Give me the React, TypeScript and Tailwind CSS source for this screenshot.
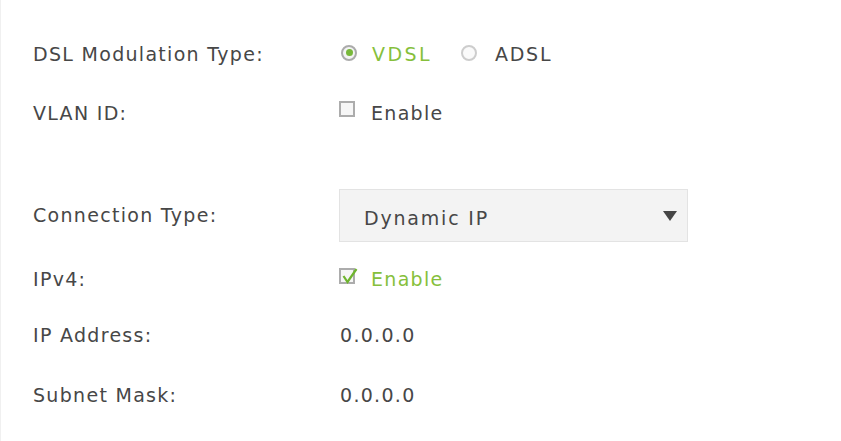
import React from 'react'

// Simple form rows for the WAN settings panel

function Radio({ checked, label }: { checked?: boolean; label: string }) {
  return (
    <label className="flex items-center">
      <span
        className={
          checked
            ? '-mt-[3px] flex h-[16px] w-[16px] shrink-0 items-center justify-center rounded-full border-[2.5px] border-[#ababab] bg-[#f4f4f4]'
            : '-mt-[3px] flex h-[16px] w-[16px] shrink-0 items-center justify-center rounded-full border-[2.5px] border-[#cdcdcd] bg-[#fafafa]'
        }
      >
        {checked && <span className="h-[7px] w-[7px] rounded-full bg-[#78b83a]" />}
      </span>
      <span className={checked ? 'ml-[15px] tracking-[2.4px] text-[#86bf3c]' : 'ml-[18px] tracking-[1.8px] text-[#474747]'}>
        {label}
      </span>
    </label>
  )
}

function Checkbox({ checked, label }: { checked?: boolean; label: string }) {
  return (
    <label className="flex items-center">
      <span
        className={`relative ${checked ? '-mt-[6px]' : '-mt-[8px]'} h-[16px] w-[16px] shrink-0 border-2 border-[#acacac] bg-[#f6f6f6]`}
      >
        {checked && (
          <svg className="absolute -left-[2px] -top-[4px]" width="20" height="20" viewBox="0 0 20 20">
            <path d="M4.5 10 L8.5 16 L17.5 3" fill="none" stroke="#6fb52e" strokeWidth="2.2" />
          </svg>
        )}
      </span>
      <span className={checked ? 'ml-[16px] text-[#86bf3c]' : 'ml-[16px] text-[#474747]'}>{label}</span>
    </label>
  )
}

function Row({ label, children, className }: { label: string; children: React.ReactNode; className?: string }) {
  return (
    <div className={`flex h-[40px] items-center ${className ?? ''}`}>
      <div className="w-[306px] shrink-0">{label}</div>
      <div className="flex items-center">{children}</div>
    </div>
  )
}

export default function App() {
  return (
    <div
      className="h-[441px] w-[841px] overflow-hidden border-l border-[#f0f0f0] bg-white pl-[32px] pt-[34px] text-[19px] leading-none tracking-[1.3px] text-[#474747]"
      style={{ fontFamily: '"DejaVu Sans", Verdana, sans-serif' }}
    >
      <Row label="DSL Modulation Type:">
        <div className="ml-[2px] flex items-center gap-[29px]">
          <Radio checked label="VDSL" />
          <Radio label="ADSL" />
        </div>
      </Row>

      <Row label="VLAN ID:" className="mt-[19px]">
        <Checkbox label="Enable" />
      </Row>

      <div className="mt-[56px] flex h-[53px] items-center">
        <div className="w-[306px] shrink-0">Connection Type:</div>
        <div className="flex h-[53px] w-[349px] items-center justify-between border border-[#e3e3e3] bg-[#f3f3f3] pl-[24px] pr-[10px]">
          <span className="pt-[5px] tracking-[1.8px]">Dynamic IP</span>
          <svg width="14" height="10" viewBox="0 0 14 10">
            <path d="M0 0 H14 L7 10 Z" fill="#454545" />
          </svg>
        </div>
      </div>

      <Row label="IPv4:" className="mt-[17px]">
        <Checkbox checked label="Enable" />
      </Row>

      <Row label="IP Address:" className="mt-[16px]">
        <span className="ml-[1px]">0.0.0.0</span>
      </Row>

      <Row label="Subnet Mask:" className="mt-[20px]">
        <span className="ml-[1px]">0.0.0.0</span>
      </Row>
    </div>
  )
}
